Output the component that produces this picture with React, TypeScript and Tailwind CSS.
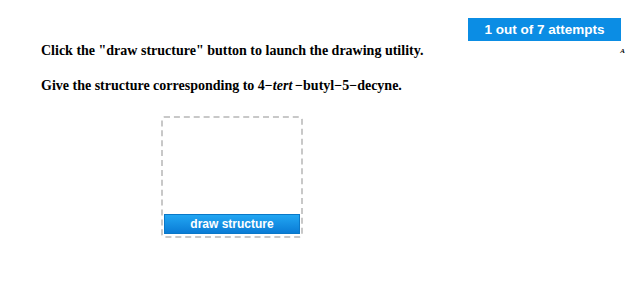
export default function App() {
  return (
    <div className="w-full h-[300px] bg-white overflow-hidden relative">
      {/* attempts badge */}
      <div className="flex justify-end pt-[18px] pr-[6px]">
        <div className="w-[153px] h-[23px] bg-[#0b8de4] flex items-center justify-center text-white font-bold text-[13.5px] font-['Arial','Liberation_Sans',sans-serif] leading-none">
          1 out of 7 attempts
        </div>
      </div>

      {/* question text */}
      <div className="pl-[41px] pt-[2px] font-['Times_New_Roman','Liberation_Serif',serif] font-bold text-[14px] leading-[16px] text-black">
        <div className="flex justify-between">
          <p>Click the &quot;draw structure&quot; button to launch the drawing utility.</p>
          <span className="italic text-[7px] leading-none mt-[5px] mr-[2px]">A</span>
        </div>
        <p className="mt-[19px]">
          Give the structure corresponding to 4&minus;<i>tert</i>&thinsp;&minus;butyl&minus;5&minus;decyne.
        </p>
      </div>

      {/* drawing area */}
      <div className="ml-[161px] mt-[22px] w-[142px] h-[122px] border-2 border-dashed border-[#c8c8c8] rounded-[3px] flex flex-col justify-end px-[1px] pb-[2px]">
        <button className="h-[20px] w-full bg-gradient-to-b from-[#22a6f2] to-[#0a7cd6] text-white font-bold text-[12px] font-['Arial','Liberation_Sans',sans-serif] leading-none flex items-center justify-center border border-[#0a78c8]">
          draw structure
        </button>
      </div>
    </div>
  );
}
